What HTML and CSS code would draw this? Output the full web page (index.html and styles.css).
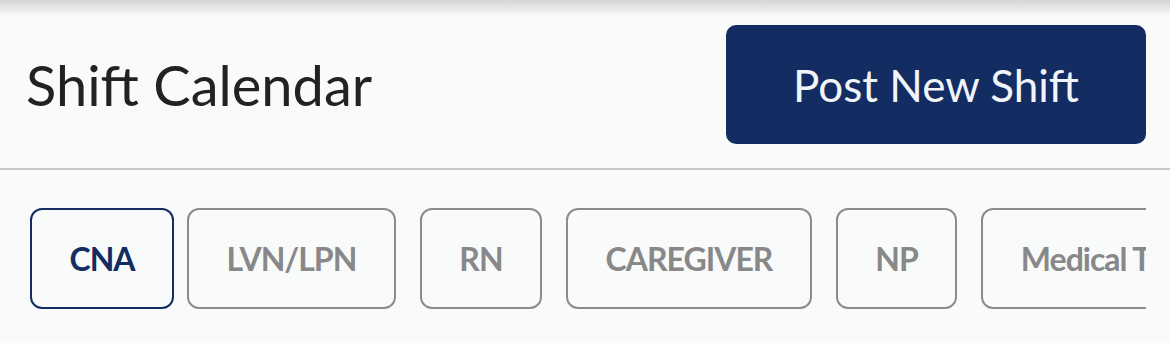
FILE: index.html
```html
<!DOCTYPE html>
<html lang="en">
<head>
<meta charset="utf-8">
<title>Shift Calendar</title>
<link rel="stylesheet" href="styles.css">
</head>
<body>
<div class="topshade"></div>
<header class="header">
  <h1 class="title">Shift Calendar</h1>
  <button class="post-btn" type="button">Post New Shift</button>
</header>
<nav class="chips">
  <button class="chip chip-active" type="button">CNA</button>
  <button class="chip" type="button">LVN/LPN</button>
  <button class="chip" type="button">RN</button>
  <button class="chip" type="button">CAREGIVER</button>
  <button class="chip" type="button">NP</button>
  <button class="chip" type="button">Medical Technician</button>
</nav>
</body>
</html>
```

FILE: styles.css
```css
* { box-sizing: border-box; }
html, body {
  margin: 0;
  padding: 0;
  background: #f9fafa;
  font-family: "Lato", "Open Sans", sans-serif;
  height: 100%;
  overflow: hidden;
}
.topshade {
  height: 16px;
  background: linear-gradient(#d4d5d5, #f9fafa);
}
.header {
  display: flex;
  align-items: center;
  justify-content: space-between;
  padding: 9px 24px 24px 26px;
  border-bottom: 2px solid #c6c7c7;
}
.title {
  margin: 0;
  font-size: 56px;
  font-weight: 400;
  color: #222222;
  line-height: 1;
}
.post-btn {
  width: 420px;
  height: 119px;
  border: none;
  border-radius: 10px;
  background: #132d62;
  color: #f1f4f8;
  font-family: inherit;
  font-size: 44px;
  font-weight: 400;
  padding: 0;
}
.chips {
  display: flex;
  gap: 24px;
  margin: 38px 24px 0 30px;
  overflow: hidden;
}
.chip {
  flex: none;
  height: 101px;
  padding: 0 37.5px;
  border: 2px solid #8c8c8c;
  border-radius: 12px;
  background: transparent;
  color: #888888;
  font-family: inherit;
  font-size: 32px;
  font-weight: 700;
  letter-spacing: -1px;
  white-space: nowrap;
}
.chip-active {
  border-color: #132d62;
  color: #132d62;
  margin-right: -11px;
}
```
